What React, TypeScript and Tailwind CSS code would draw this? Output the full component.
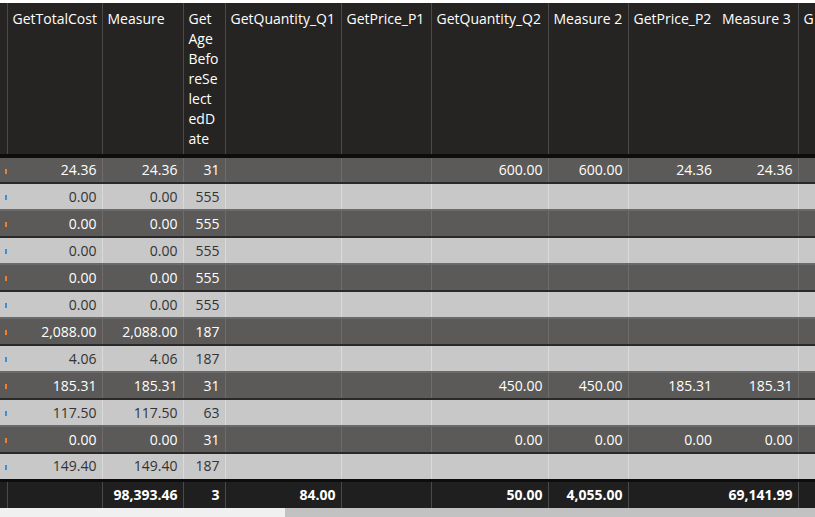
const cols = [
  { w: 7, h: "" },
  { w: 95, h: "GetTotalCost" },
  { w: 81, h: "Measure" },
  { w: 42, h: "Get Age Befo reSe lect edD ate" },
  { w: 116, h: "GetQuantity_Q1" },
  { w: 90, h: "GetPrice_P1" },
  { w: 117, h: "GetQuantity_Q2" },
  { w: 80, h: "Measure 2" },
  { w: 89, h: "GetPrice_P2" },
  { w: 81, h: "Measure 3" },
  { w: 40, h: "G" },
];

const rows = [
  ["24.36", "24.36", "31", "", "", "600.00", "600.00", "24.36", "24.36"],
  ["0.00", "0.00", "555"],
  ["0.00", "0.00", "555"],
  ["0.00", "0.00", "555"],
  ["0.00", "0.00", "555"],
  ["0.00", "0.00", "555"],
  ["2,088.00", "2,088.00", "187"],
  ["4.06", "4.06", "187"],
  ["185.31", "185.31", "31", "", "", "450.00", "450.00", "185.31", "185.31"],
  ["117.50", "117.50", "63"],
  ["0.00", "0.00", "31", "", "", "0.00", "0.00", "0.00", "0.00"],
  ["149.40", "149.40", "187"],
];

const totals = ["", "", "98,393.46", "3", "84.00", "", "50.00", "4,055.00", "", "69,141.99", ""];

export default function App() {
  return (
    <div className="w-[815px] h-[517px] overflow-hidden bg-white text-[14px]" style={{ fontFamily: '"Open Sans", "Noto Sans", sans-serif' }}>
      <div className="h-[3px] bg-white" />
      <table className="table-fixed border-collapse" style={{ width: cols.reduce((a, c) => a + c.w, 0) }}>
        <colgroup>
          {cols.map((c, i) => (
            <col key={i} style={{ width: c.w }} />
          ))}
        </colgroup>
        <thead>
          <tr className="bg-[#252423] text-white h-[153px] border-b-[4px] border-[#0d0d0d]">
            {cols.map((c, i) => (
              <th key={i} className={`align-top text-left font-normal px-[5px] pt-[6px] leading-[20px] break-all overflow-hidden whitespace-normal ${i === 8 ? "" : "border-r border-[#4a4a4a]"}`}>
                {i === 3 ? (
                  <span className="block">
                    {c.h.split(" ").map((s, j) => (
                      <span key={j} className="block">{s}</span>
                    ))}
                  </span>
                ) : (
                  <span className="whitespace-nowrap">{c.h}</span>
                )}
              </th>
            ))}
          </tr>
        </thead>
        <tbody>
          {rows.map((r, ri) => {
            const dark = ri % 2 === 0;
            return (
              <tr key={ri} className={`h-[27px] border-b-2 ${dark ? "bg-[#5b5a59] text-white border-[#2a2a2a]" : "bg-[#c8c8c8] text-[#333333] border-[#6a6a6a]"}`}>
                <td className="p-0 relative">
                  <span className={`absolute right-0 top-[11px] w-[2px] h-[5px] ${dark ? "bg-[#e8803a]" : "bg-[#3a8fd8]"}`} />
                </td>
                {cols.slice(1).map((_, ci) => (
                  <td key={ci} className={`text-right px-[5px] leading-none whitespace-nowrap ${ci === 7 ? "" : "border-r"} ${dark ? "border-[#6e6d6c]" : "border-[#dadada]"}`}>
                    {r[ci] ?? ""}
                  </td>
                ))}
              </tr>
            );
          })}
          <tr className="h-[28px] bg-[#1f1f1f] text-white font-bold border-t-[3px] border-[#0d0d0d]">
            {totals.map((t, i) => (
              <td key={i} className={`text-right px-[5px] whitespace-nowrap ${i === 8 ? "" : "border-r"} border-[#4a4a4a]`}>{t}</td>
            ))}
          </tr>
        </tbody>
      </table>
      <div className="flex h-[10px] bg-[#f0f0f0]">
        <div className="w-[285px]" />
        <div className="flex-1 bg-[#c2c2c2]" />
      </div>
    </div>
  );
}
